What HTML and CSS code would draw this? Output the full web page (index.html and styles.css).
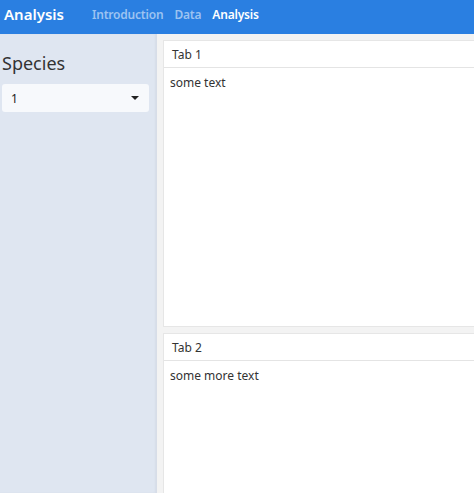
FILE: index.html
```html
<!DOCTYPE html>
<html>
<head>
<meta charset="utf-8">
<link rel="stylesheet" href="styles.css">
</head>
<body>
<nav class="navbar">
  <span class="brand">Analysis</span>
  <ul class="nav">
    <li class="nav-link">Introduction</li>
    <li class="nav-link">Data</li>
    <li class="nav-link active">Analysis</li>
  </ul>
</nav>
<div class="layout">
  <aside class="sidebar">
    <h2 class="label">Species</h2>
    <div class="select">
      <span>1</span>
      <span class="caret"></span>
    </div>
  </aside>
  <main class="main">
    <section class="card card-1">
      <div class="card-header">Tab 1</div>
      <div class="card-body">some text</div>
    </section>
    <section class="card card-2">
      <div class="card-header">Tab 2</div>
      <div class="card-body">some more text</div>
    </section>
  </main>
</div>
</body>
</html>
```
FILE: styles.css
```css
html, body {
  margin: 0;
  padding: 0;
  overflow: hidden;
  height: 493px;
  background: #f3f3f3;
  font-family: "Noto Sans", "Open Sans", sans-serif;
  color: #333;
}
.navbar {
  height: 34px;
  background: #2a7fe1;
  display: flex;
  align-items: center;
  padding: 0 0 6px 4px;
  box-sizing: border-box;
}
.brand {
  color: #fff;
  font-weight: 600;
  font-size: 15px;
  margin-right: 28px;
}
.nav {
  list-style: none;
  margin: 0;
  padding: 0;
  display: flex;
  gap: 11px;
}
.nav-link {
  font-size: 12px;
  font-weight: 600;
  letter-spacing: -0.2px;
  color: #9cc3f1;
}
.nav-link.active {
  color: #fff;
}
.layout {
  display: flex;
  height: 459px;
}
.sidebar {
  width: 157px;
  flex: none;
  background: #dfe6f1;
  box-shadow: inset -2px 0 2px rgba(0,0,0,0.04);
  padding: 18px 8px 0 2px;
  box-sizing: border-box;
}
.label {
  margin: 0 0 10px 0;
  font-size: 18px;
  font-weight: 400;
  color: #333;
  line-height: 22px;
}
.select {
  height: 28px;
  background: #f7f9fc;
  border-radius: 3px;
  display: flex;
  align-items: center;
  justify-content: space-between;
  padding: 0 10px 0 9px;
  font-size: 12px;
  color: #222;
}
.caret {
  width: 0;
  height: 0;
  border-left: 4px solid transparent;
  border-right: 4px solid transparent;
  border-top: 4px solid #222;
}
.main {
  flex: 1;
  min-width: 0;
  padding: 6px 0 0 6px;
  display: flex;
  flex-direction: column;
  gap: 6px;
}
.card {
  background: #fff;
  border: 1px solid #e6e6e6;
  border-right: none;
  flex: none;
}
.card-1 { height: 285px; }
.card-2 { flex: 1; border-bottom: none; }
.card-header {
  height: 26px;
  border-bottom: 1px solid #e4e4e4;
  display: flex;
  align-items: center;
  padding-left: 8px;
  font-size: 12px;
  color: #333;
}
.card-body {
  padding: 6px 6px;
  font-size: 12px;
  color: #333;
}
```
